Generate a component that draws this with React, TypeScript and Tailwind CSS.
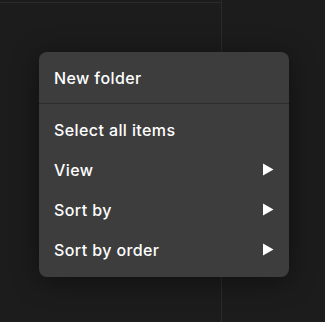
import { useState } from "react";

// --- Types ---
interface MenuItem {
    label: string;
    submenu?: boolean;
}

const items: MenuItem[] = [
    { label: "Select all items" },
    { label: "View", submenu: true },
    { label: "Sort by", submenu: true },
    { label: "Sort by order", submenu: true },
];

function Arrow() {
    return (
        <svg width="12" height="13" viewBox="0 0 12 13" className="shrink-0">
            <path d="M1 0.5 L11.5 6.5 L1 12.5 Z" fill="#ffffff" />
        </svg>
    );
}

export default function App() {
    const [active, setActive] = useState<string | null>(null);

    return (
        <div
            className="relative w-[325px] h-[322px] bg-[#1c1c1c] overflow-hidden flex flex-col"
            style={{ fontFamily: "Inter, 'Noto Sans', sans-serif" }}
        >
            {/* top strip */}
            <div className="h-[3px] w-[222px] border-b border-r border-[#2b2b2b] shrink-0" />
            <div className="flex flex-1">
                <div className="w-[222px] border-r border-[#2b2b2b]" />
                <div className="flex-1" />
            </div>

            {/* context menu */}
            <div className="absolute left-[39px] top-[52px] w-[250px] h-[225px] rounded-[8px] bg-[#3d3d3d] shadow-[0_4px_28px_rgba(0,0,0,0.45)] flex flex-col">
                <button className="h-[52px] px-[15px] pt-[1px] flex items-center text-left text-[16px] text-white font-medium tracking-[0.4px] border-b border-[#2c2c2c]">
                    New folder
                </button>
                <div className="pt-[5px] flex flex-col">
                    {items.map((item) => (
                        <div
                            key={item.label}
                            onMouseEnter={() => setActive(item.label)}
                            onMouseLeave={() => setActive(null)}
                            className={`h-[40px] px-[15px] pt-[1px] flex items-center justify-between text-[16px] text-white font-medium tracking-[0.4px] ${
                                active === item.label ? "bg-[#474747]" : ""
                            }`}
                        >
                            <span>{item.label}</span>
                            {item.submenu && <Arrow />}
                        </div>
                    ))}
                </div>
            </div>
        </div>
    );
}
